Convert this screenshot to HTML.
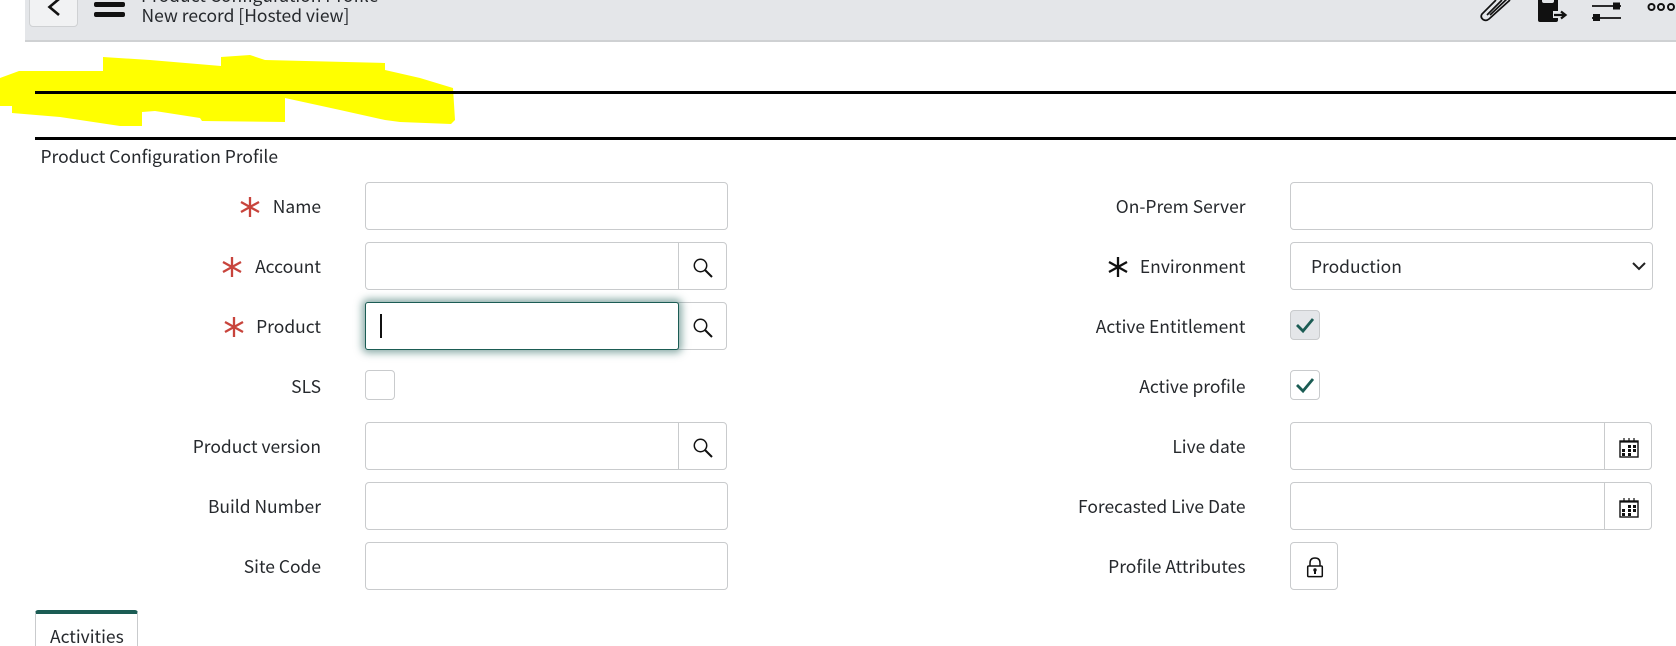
<!DOCTYPE html>
<html>
<head>
<meta charset="utf-8">
<style>
html,body{margin:0;padding:0;background:#fff;}
#p{position:relative;width:1676px;height:646px;overflow:hidden;background:#fff;font-family:"Noto Sans CJK SC","Liberation Sans",sans-serif;font-size:17.45px;color:#26292d;}
#p div,#p svg{position:absolute;}
.t{white-space:nowrap;line-height:24px;height:24px;}
.l{text-align:right;width:300px;}
.i{box-sizing:border-box;background:#fff;border:1px solid #c9cbcd;border-radius:4px;height:48px;}
.d{width:1px;background:#c9cbcd;height:46px;}
</style>
</head>
<body>
<div id="p">
  <div style="left:25px;top:0;width:1651px;height:40px;background:#e4e6e9;"></div>
  <div style="left:25px;top:40px;width:1651px;height:2px;background:#cfd1d3;"></div>
  <div style="left:29px;top:-8px;width:49px;height:35px;box-sizing:border-box;background:#f1f2f3;border:1px solid #cfd1d3;border-radius:4px;"></div>
  <svg style="left:46px;top:0" width="16" height="16" viewBox="0 0 16 16"><path d="M13 -1 L3.5 7 L13 15" fill="none" stroke="#111" stroke-width="2.6"/></svg>
  <div style="left:94px;top:1.5px;width:31px;height:5px;background:#111;border-radius:2px;"></div>
  <div style="left:94px;top:11.5px;width:31px;height:5px;background:#111;border-radius:2px;"></div>
  <div class="t" style="left:141px;top:-16.5px;">Product Configuration Profile</div>
  <div class="t" style="left:141.5px;top:4px;">New record [Hosted view]</div>

  <svg style="left:1478px;top:0" width="40" height="24" viewBox="0 0 40 24"><path d="M18 0 L4 14 Q2 17 5 19.5 Q8 21.5 11 19 L32 0 M24 0 L9 15 M31 -3 L12 15" fill="none" stroke="#111" stroke-width="1.7"/></svg>
  <svg style="left:1538px;top:0" width="30" height="24" viewBox="0 0 30 24"><path d="M0 0H20V11H15V18H20V20Q20 22 18 22H2Q0 22 0 20Z" fill="#111"/><path d="M4 0V1Q4 3 6 3H14Q16 3 16 1V0" fill="#e4e6e9"/><path d="M16 15H26M23 11.5L27.5 15L23 18.5" fill="none" stroke="#111" stroke-width="2.2"/></svg>
  <svg style="left:1592px;top:0" width="32" height="24" viewBox="0 0 32 24"><path d="M0 6H29M0 18H29" stroke="#111" stroke-width="1.7"/><rect x="21" y="2.5" width="7" height="7" fill="#111"/><rect x="1" y="14" width="7" height="7" fill="#111"/></svg>
  <svg style="left:1647px;top:0" width="29" height="14" viewBox="0 0 29 14"><g fill="none" stroke="#111" stroke-width="2"><circle cx="4.5" cy="7" r="3"/><circle cx="14" cy="7" r="3"/><circle cx="24" cy="7" r="3"/></g></svg>

  <svg style="left:0;top:50px" width="470" height="85" viewBox="0 50 470 85"><path d="M0 78L19 71H103V57L150 60L221 66V57L250 55L265 60L385 63V70L420 78L453 88L455 120L451 124L400 122L385 120L340 110L285 98V122L202 121L200 118L155 111L142 112V126L120 126L60 117L12 113V106L0 106Z" fill="#ffff00"/></svg>
  <div style="left:35px;top:91px;width:1641px;height:3px;background:#000;"></div>
  <div style="left:35px;top:137px;width:1641px;height:3px;background:#000;"></div>

  <div class="t" style="left:40.5px;top:145px;">Product Configuration Profile</div>

  <!-- left labels -->
  <div class="t l" style="left:21px;top:195px;">Name</div>
  <div class="t l" style="left:21px;top:255px;">Account</div>
  <div class="t l" style="left:21px;top:315px;">Product</div>
  <div class="t l" style="left:21px;top:375px;">SLS</div>
  <div class="t l" style="left:21px;top:435px;">Product version</div>
  <div class="t l" style="left:21px;top:495px;">Build Number</div>
  <div class="t l" style="left:21px;top:555px;">Site Code</div>

  <svg style="left:240px;top:197px" width="20" height="20" viewBox="0 0 20 20"><path d="M10 0V20M1 5L19 15M19 5L1 15" stroke="#c8443c" stroke-width="2.3"/></svg>
  <svg style="left:222px;top:257px" width="20" height="20" viewBox="0 0 20 20"><path d="M10 0V20M1 5L19 15M19 5L1 15" stroke="#c8443c" stroke-width="2.3"/></svg>
  <svg style="left:224px;top:317px" width="20" height="20" viewBox="0 0 20 20"><path d="M10 0V20M1 5L19 15M19 5L1 15" stroke="#c8443c" stroke-width="2.3"/></svg>
  <svg style="left:1108px;top:257px" width="20" height="20" viewBox="0 0 20 20"><path d="M10 0V20M1 5L19 15M19 5L1 15" stroke="#111" stroke-width="2.3"/></svg>

  <!-- left inputs -->
  <div class="i" style="left:365px;top:182px;width:363px;"></div>
  <div class="i" style="left:365px;top:242px;width:362px;"></div>
  <div class="d" style="left:678px;top:243px;"></div>
  <div class="i" style="left:365px;top:302px;width:362px;"></div>
  <div class="d" style="left:678px;top:303px;"></div>
  <div class="i" style="left:365px;top:302px;width:314px;border:1px solid #1b5c54;border-radius:3px;box-shadow:0 0 8px 3px rgba(27,92,84,.5);"></div>
  <div style="left:380px;top:314px;width:2px;height:24px;background:#111;"></div>
  <div class="i" style="left:365px;top:370px;width:30px;height:30px;"></div>
  <div class="i" style="left:365px;top:422px;width:362px;"></div>
  <div class="d" style="left:678px;top:423px;"></div>
  <div class="i" style="left:365px;top:482px;width:363px;"></div>
  <div class="i" style="left:365px;top:542px;width:363px;"></div>

  <svg style="left:692px;top:257px" width="22" height="22" viewBox="0 0 22 22"><circle cx="8.5" cy="8.5" r="6.2" fill="none" stroke="#111" stroke-width="1.5"/><path d="M13 13L20 20" stroke="#111" stroke-width="2"/></svg>
  <svg style="left:692px;top:317px" width="22" height="22" viewBox="0 0 22 22"><circle cx="8.5" cy="8.5" r="6.2" fill="none" stroke="#111" stroke-width="1.5"/><path d="M13 13L20 20" stroke="#111" stroke-width="2"/></svg>
  <svg style="left:692px;top:437px" width="22" height="22" viewBox="0 0 22 22"><circle cx="8.5" cy="8.5" r="6.2" fill="none" stroke="#111" stroke-width="1.5"/><path d="M13 13L20 20" stroke="#111" stroke-width="2"/></svg>

  <!-- right labels -->
  <div class="t l" style="left:945.5px;top:195px;">On-Prem Server</div>
  <div class="t l" style="left:945.5px;top:255px;">Environment</div>
  <div class="t l" style="left:945.5px;top:315px;">Active Entitlement</div>
  <div class="t l" style="left:945.5px;top:375px;">Active profile</div>
  <div class="t l" style="left:945.5px;top:435px;">Live date</div>
  <div class="t l" style="left:945.5px;top:495px;">Forecasted Live Date</div>
  <div class="t l" style="left:945.5px;top:555px;">Profile Attributes</div>

  <!-- right inputs -->
  <div class="i" style="left:1290px;top:182px;width:363px;"></div>
  <div class="i" style="left:1290px;top:242px;width:363px;"></div>
  <div class="t" style="left:1311px;top:255px;">Production</div>
  <svg style="left:1631px;top:261px" width="16" height="10" viewBox="0 0 16 10"><path d="M2 2L8 8L14 2" fill="none" stroke="#222" stroke-width="2"/></svg>
  <div class="i" style="left:1290px;top:310px;width:30px;height:30px;background:#e4e6e9;"></div>
  <svg style="left:1295px;top:316px" width="20" height="18" viewBox="0 0 20 18"><path d="M2 9L8 15L18 3" fill="none" stroke="#1b5c54" stroke-width="2.8"/></svg>
  <div class="i" style="left:1290px;top:370px;width:30px;height:30px;"></div>
  <svg style="left:1295px;top:376px" width="20" height="18" viewBox="0 0 20 18"><path d="M2 9L8 15L18 3" fill="none" stroke="#1b5c54" stroke-width="2.8"/></svg>
  <div class="i" style="left:1290px;top:422px;width:362px;"></div>
  <div class="d" style="left:1604px;top:423px;"></div>
  <div class="i" style="left:1290px;top:482px;width:362px;"></div>
  <div class="d" style="left:1604px;top:483px;"></div>
  <svg style="left:1619px;top:438px" width="20" height="20" viewBox="0 0 20 20"><rect x="1" y="3" width="18" height="16" fill="none" stroke="#111" stroke-width="1.4"/><path d="M1 4H19M5 0V4M10 0V4M15 0V4" stroke="#111" stroke-width="1.2"/><path d="M9 7h3v3H9zM14 7h3v3h-3zM3 11h3v3H3zM9 11h3v3H9zM14 11h3v3h-3zM3 15h3v3H3zM9 15h3v3H9z" fill="#111"/></svg>
  <svg style="left:1619px;top:498px" width="20" height="20" viewBox="0 0 20 20"><rect x="1" y="3" width="18" height="16" fill="none" stroke="#111" stroke-width="1.4"/><path d="M1 4H19M5 0V4M10 0V4M15 0V4" stroke="#111" stroke-width="1.2"/><path d="M9 7h3v3H9zM14 7h3v3h-3zM3 11h3v3H3zM9 11h3v3H9zM14 11h3v3h-3zM3 15h3v3H3zM9 15h3v3H9z" fill="#111"/></svg>
  <div class="i" style="left:1290px;top:542px;width:48px;"></div>
  <svg style="left:1306px;top:557px" width="18" height="21" viewBox="0 0 18 21"><path d="M4 9V6Q4 1 9 1Q14 1 14 6V9" fill="none" stroke="#111" stroke-width="1.5"/><rect x="1.7" y="9" width="14.6" height="10.6" rx="1" fill="none" stroke="#111" stroke-width="1.5"/><path d="M9 12V17" stroke="#111" stroke-width="2"/><circle cx="9" cy="13" r="1.7" fill="#111"/></svg>

  <!-- tab -->
  <div style="left:35px;top:610px;width:103px;height:40px;box-sizing:border-box;background:#fff;border:1px solid #c9cbcd;border-top:4px solid #1b5c54;border-radius:3px 3px 0 0;"></div>
  <div class="t" style="left:50px;top:625px;">Activities</div>
</div>
</body>
</html>
